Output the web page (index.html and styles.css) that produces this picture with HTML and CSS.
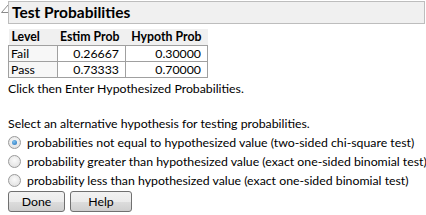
FILE: index.html
```html
<!DOCTYPE html>
<html>
<head>
<meta charset="utf-8">
<link rel="stylesheet" href="styles.css">
</head>
<body>
<div class="outline">
  <div class="head">
    <svg class="tri" width="8" height="9" viewBox="0 0 8 9"><path d="M7.5 0.5 L7.5 8.5 L0.5 8.5 Z" fill="#fff" stroke="#8a8a8a" stroke-width="1"/></svg>
    <div class="title">Test Probabilities</div>
  </div>
  <div class="content">
    <table class="tbl">
      <colgroup><col class="c1"><col class="c2"><col class="c3"></colgroup>
      <thead>
        <tr><th class="lvl">Level</th><th>Estim Prob</th><th>Hypoth Prob</th></tr>
      </thead>
      <tbody>
        <tr><td class="lvl">Fail</td><td>0.26667</td><td>0.30000</td></tr>
        <tr><td class="lvl">Pass</td><td>0.73333</td><td>0.70000</td></tr>
      </tbody>
    </table>
    <div class="line">Click then Enter Hypothesized Probabilities.</div>
    <div class="line gap">Select an alternative hypothesis for testing probabilities.</div>
    <div class="radios">
      <div class="radio"><span class="dot on"></span>probabilities not equal to hypothesized value (two-sided chi-square test)</div>
      <div class="radio"><span class="dot"></span>probability greater than hypothesized value (exact one-sided binomial test)</div>
      <div class="radio"><span class="dot"></span>probability less than hypothesized value (exact one-sided binomial test)</div>
    </div>
    <div class="buttons">
      <button class="btn done">Done</button>
      <button class="btn help">Help</button>
    </div>
  </div>
</div>
</body>
</html>
```
FILE: styles.css
```css
html, body { margin: 0; padding: 0; background: #fff; }
body {
  font-family: "Lato", "Noto Sans", "DejaVu Sans", sans-serif;
  font-size: 12.3px;
  color: #000;
  width: 426px;
  height: 215px;
  overflow: hidden;
  white-space: nowrap;
}
.outline { padding: 1px 0 0 0; }
.head {
  display: flex;
  align-items: flex-start;
}
.tri { margin: 3px 0 0 1px; flex: none; }
.title {
  flex: 1;
  margin-left: -1px;
  height: 23px;
  box-sizing: border-box;
  border: 1px solid #bdbdbd;
  background: #f0f0f0;
  font-weight: bold;
  font-size: 15.5px;
  line-height: 20px;
  padding-left: 3px;
  margin-right: 1px;
}
.content { padding-left: 8px; }
.tbl {
  border-collapse: collapse;
  margin-top: 5px;
  font-size: 12.3px;
  table-layout: fixed;
  width: 199px;
}
.c1 { width: 49px; }
.c2 { width: 68px; }
.c3 { width: 82px; }
.tbl th {
  background: #f0f0f0;
  font-weight: bold;
  text-align: right;
  height: 16px;
  padding: 0 6px 0 0;
  line-height: 16px;
}
.tbl th.lvl { text-align: left; padding-left: 3px; }
.tbl td {
  border: 1px solid #a0a0a0;
  text-align: right;
  height: 15px;
  line-height: 15px;
  padding: 0 6px 0 0;
}
.tbl td.lvl { text-align: left; padding-left: 2px; background: #f7f7f7; }
.line { line-height: 16px; margin-top: 3px; }
.line.gap { margin-top: 19px; }
.radios { margin-top: 1px; }
.radio {
  display: flex;
  align-items: center;
  height: 19px;
}
.dot {
  width: 11px;
  height: 11px;
  border-radius: 50%;
  border: 1px solid #9a9a9a;
  background: radial-gradient(circle at 50% 40%, #fafafa, #dcdcdc);
  margin-right: 6px;
  box-sizing: content-box;
  position: relative;
  flex: none;
}
.dot.on::after {
  content: "";
  position: absolute;
  left: 3px; top: 3px;
  width: 5px; height: 5px;
  border-radius: 50%;
  background: radial-gradient(circle at 40% 35%, #7fc3f0, #1f6cb8);
}
.buttons { display: flex; gap: 5px; margin-top: 1px; }
.btn {
  font-family: inherit;
  font-size: 12.3px;
  height: 21px;
  border: 1px solid #707070;
  border-radius: 3px;
  background: linear-gradient(#f2f2f2 0%, #ebebeb 50%, #dddddd 51%, #cfcfcf 100%);
  padding: 0;
  color: #000;
}
.btn.done { width: 57px; }
.btn.help { width: 62px; }
```
